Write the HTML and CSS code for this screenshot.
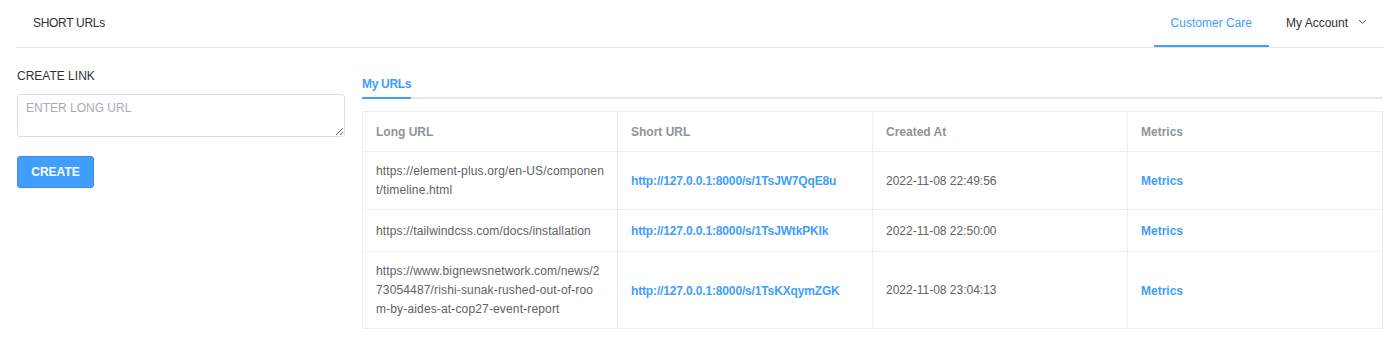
FILE: index.html
```html
<!DOCTYPE html>
<html lang="en">
<head>
<meta charset="utf-8">
<title>SHORT URLs</title>
<link rel="stylesheet" href="styles.css">
</head>
<body>
<header class="menu">
  <div class="menu-item brand">SHORT URLs</div>
  <div class="menu-spacer"></div>
  <div class="menu-item active">Customer Care</div>
  <div class="menu-item submenu">My Account
    <svg class="chev" width="9" height="6" viewBox="0 0 9 6"><path d="M1 1l3.5 3.5L8 1" fill="none" stroke="#606266" stroke-width="1"/></svg>
  </div>
</header>
<main class="main">
  <section class="create">
    <div class="label">CREATE LINK</div>
    <textarea class="input" placeholder="ENTER LONG URL"></textarea>
    <button class="btn">CREATE</button>
  </section>
  <section class="list">
    <div class="tabs"><div class="tab active">My URLs</div></div>
    <table class="table">
      <thead>
        <tr><th>Long URL</th><th>Short URL</th><th>Created At</th><th>Metrics</th></tr>
      </thead>
      <tbody>
        <tr>
          <td class="long">https://element-plus.org/en-US/componen<br>t/timeline.html</td>
          <td><a class="link short">http://127.0.0.1:8000/s/1TsJW7QqE8u</a></td>
          <td>2022-11-08 22:49:56</td>
          <td><a class="link">Metrics</a></td>
        </tr>
        <tr>
          <td class="long">https://tailwindcss.com/docs/installation</td>
          <td><a class="link short">http://127.0.0.1:8000/s/1TsJWtkPKIk</a></td>
          <td>2022-11-08 22:50:00</td>
          <td><a class="link">Metrics</a></td>
        </tr>
        <tr>
          <td class="long">https://www.bignewsnetwork.com/news/2<br>73054487/rishi-sunak-rushed-out-of-roo<br>m-by-aides-at-cop27-event-report</td>
          <td><a class="link short">http://127.0.0.1:8000/s/1TsKXqymZGK</a></td>
          <td>2022-11-08 23:04:13</td>
          <td><a class="link">Metrics</a></td>
        </tr>
      </tbody>
    </table>
  </section>
</main>
</body>
</html>
```

FILE: styles.css
```css
* { box-sizing: border-box; }
body {
  margin: 0;
  font-family: "Liberation Sans", Arial, sans-serif;
  font-size: 12px;
  color: #606266;
  background: #fff;
}
.menu {
  display: flex;
  margin: 0 16px 0 16px;
  height: 48px;
  border-bottom: 1px solid #e4e7ed;
}
.menu-spacer { flex: 1; }
.menu-item {
  display: flex;
  align-items: center;
  padding: 0 17px;
  height: 47px;
  font-size: 12px;
  color: #303133;
  border-bottom: 2px solid transparent;
  padding-top: 1px;
}
.menu-item.brand { letter-spacing: -0.3px; }
.menu-item.active {
  color: #409eff;
  border-bottom-color: #409eff;
}
.submenu .chev { margin-left: 10px; margin-top: -2px; }
.main {
  display: grid;
  grid-template-columns: 328px 1fr;
  column-gap: 17px;
  padding: 19px 17px 0 17px;
}
.create { display: flex; flex-direction: column; align-items: flex-start; }
.label {
  line-height: 16px;
  color: #303133;
  padding-top: 1px;
}
.input {
  margin-top: 10px;
  width: 328px;
  height: 43px;
  border: 1px solid #dcdfe6;
  border-radius: 3px;
  padding: 4px 8px;
  font-family: inherit;
  font-size: 12px;
  line-height: 18px;
  color: #606266;
  resize: vertical;
  outline: none;
}
.input::placeholder { color: #a8abb2; }
.btn {
  margin-top: 19px;
  width: 77px;
  height: 32px;
  background: #409eff;
  border: 1px solid #3a8ee6;
  border-radius: 3px;
  color: #fff;
  font-family: inherit;
  font-size: 12px;
  font-weight: bold;
  padding: 0;
}
.tabs {
  display: flex;
  border-bottom: 2px solid #e4e7ed;
  height: 32px;
}
.tab {
  height: 32px;
  line-height: 30px;
  padding-top: 2px;
  font-size: 12px;
  font-weight: bold;
  letter-spacing: -0.3px;
  color: #303133;
  border-bottom: 2px solid transparent;
  margin-bottom: -2px;
}
.tab.active { color: #409eff; border-bottom-color: #409eff; }
.table {
  margin-top: 12px;
  width: 100%;
  table-layout: fixed;
  border-collapse: separate;
  border-spacing: 0;
  border-top: 1px solid #ebeef5;
  border-left: 1px solid #ebeef5;
}
.table th, .table td {
  text-align: left;
  vertical-align: middle;
  border-right: 1px solid #ebeef5;
  border-bottom: 1px solid #ebeef5;
  padding: 10px 12px 9px 13px;
}
.table th {
  line-height: 20px;
  color: #909399;
  font-weight: bold;
}
.table td {
  line-height: 19px;
  color: #606266;
}
.table td.long {
  word-break: break-all;
  letter-spacing: 0.15px;
  padding-right: 8px;
}
.link {
  color: #409eff;
  text-decoration: none;
  display: inline-block;
  line-height: 22px;
  vertical-align: middle;
  font-weight: bold;
}
.link.short { letter-spacing: -0.15px; }
```
